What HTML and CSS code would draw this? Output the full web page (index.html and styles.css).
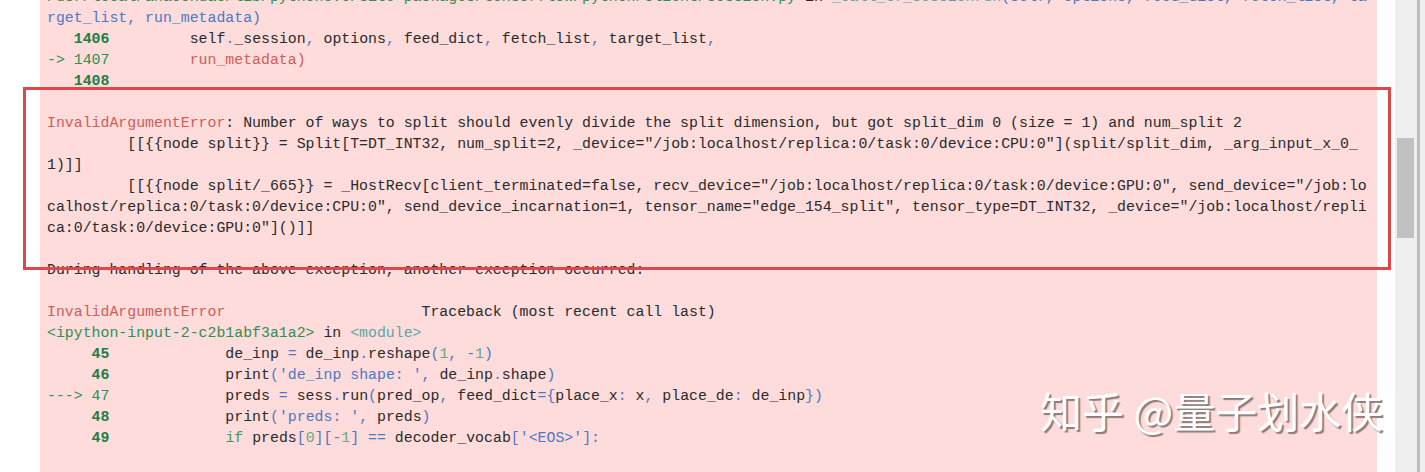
FILE: index.html
```html
<!DOCTYPE html>
<html lang="en">
<head>
<meta charset="utf-8">
<title>Traceback</title>
<link rel="stylesheet" href="styles.css">
</head>
<body>
<div class="page">
  <div class="gutter"></div>
  <div class="output">
<pre class="trace"><span class="g">/usr/local/anaconda3/lib/python3.6/site-packages/tensorflow/python/client/session.py</span> in <span class="c">_call_tf_sessionrun</span><span class="b">(self, options, feed_dict, fetch_list, ta</span>
<span class="b">rget_list, run_metadata)</span>
   <span class="gb">1406</span>         self<span class="b">.</span>_session<span class="b">,</span> options<span class="b">,</span> feed_dict<span class="b">,</span> fetch_list<span class="b">,</span> target_list<span class="b">,</span>
<span class="g">-&gt; 1407</span><span class="r">         run_metadata)</span>
   <span class="gb">1408</span>

<span class="r">InvalidArgumentError</span>: Number of ways to split should evenly divide the split dimension, but got split_dim 0 (size = 1) and num_split 2
         [[{{node split}} = Split[T=DT_INT32, num_split=2, _device="/job:localhost/replica:0/task:0/device:CPU:0"](split/split_dim, _arg_input_x_0_
1)]]
         [[{{node split/_665}} = _HostRecv[client_terminated=false, recv_device="/job:localhost/replica:0/task:0/device:GPU:0", send_device="/job:lo
calhost/replica:0/task:0/device:CPU:0", send_device_incarnation=1, tensor_name="edge_154_split", tensor_type=DT_INT32, _device="/job:localhost/repli
ca:0/task:0/device:GPU:0"]()]]

During handling of the above exception, another exception occurred:

<span class="r">InvalidArgumentError</span>                      Traceback (most recent call last)
<span class="g">&lt;ipython-input-2-c2b1abf3a1a2&gt;</span> in <span class="c">&lt;module&gt;</span>
     <span class="gb">45</span>             de_inp <span class="b">=</span> de_inp<span class="b">.</span>reshape<span class="b">(</span><span class="n">1</span><span class="b">,</span> <span class="b">-</span><span class="n">1</span><span class="b">)</span>
     <span class="gb">46</span>             print<span class="b">(</span><span class="b">'de_inp shape: '</span><span class="b">,</span> de_inp<span class="b">.</span>shape<span class="b">)</span>
<span class="g">---&gt; 47</span>             preds <span class="b">=</span> sess<span class="b">.</span>run<span class="b">(</span>pred_op<span class="b">,</span> feed_dict<span class="b">={</span>place_x<span class="b">:</span> x<span class="b">,</span> place_de<span class="b">:</span> de_inp<span class="b">})</span>
     <span class="gb">48</span>             print<span class="b">(</span><span class="b">'preds: '</span><span class="b">,</span> preds<span class="b">)</span>
     <span class="gb">49</span>             <span class="k">if</span> preds<span class="b">[</span><span class="n">0</span><span class="b">][-</span><span class="n">1</span><span class="b">]</span> <span class="b">==</span> decoder_vocab<span class="b">['&lt;EOS&gt;']:</span>
</pre>
  </div>
  <div class="gap"></div>
  <div class="scroll">
    <div class="track"><div class="thumb"></div></div>
    <div class="edge"></div>
    <div class="rest"></div>
  </div>
  <div class="highlight"></div>
  <div class="watermark">知乎 @量子划水侠</div>
</div>
</body>
</html>
```
FILE: styles.css
```css
html, body {
  margin: 0;
  padding: 0;
  background: #ffffff;
}

.page {
  position: relative;
  display: flex;
  width: 1425px;
  height: 472px;
  overflow: hidden;
}

.gutter {
  flex: 0 0 40px;
  background: #ffffff;
}

.output {
  flex: 0 0 1337px;
  background: #fddcdb;
  overflow: hidden;
}

.trace {
  margin: -13px 0 0 0;
  padding: 0 0 0 7px;
  font-family: "Liberation Mono", monospace;
  font-size: 14.87px;
  line-height: 21px;
  color: #2a2a2a;
  white-space: pre;
}

.g { color: #2f8f50; }
.gb { color: #1f7f42; font-weight: bold; }
.r { color: #d25c58; }
.b { color: #4d78c4; }
.c { color: #5aa7a7; }
.n { color: #6aa77a; }
.k { color: #3f9a58; }

.gap {
  flex: 0 0 18px;
  background: #ffffff;
}

.scroll {
  flex: 0 0 30px;
  display: flex;
  background: #efefef;
}

.track {
  flex: 0 0 22px;
  padding-top: 138px;
}

.thumb {
  margin-left: 2px;
  width: 17px;
  height: 100px;
  background: #c1c1c1;
}

.edge {
  flex: 0 0 3px;
  background: #bcbcbc;
}

.rest {
  flex: 1;
  background: #efefef;
}

.highlight {
  position: absolute;
  left: 23px;
  top: 87px;
  width: 1362px;
  height: 177px;
  border: 3px solid #e0474a;
}

.watermark {
  position: absolute;
  left: 1040px;
  top: 389px;
  font-family: "Noto Sans CJK SC", "Noto Sans", sans-serif;
  font-size: 42px;
  line-height: 42px;
  color: #ffffff;
  text-shadow: 2px 2px 1px #8c7c7c;
  white-space: nowrap;
}
```
